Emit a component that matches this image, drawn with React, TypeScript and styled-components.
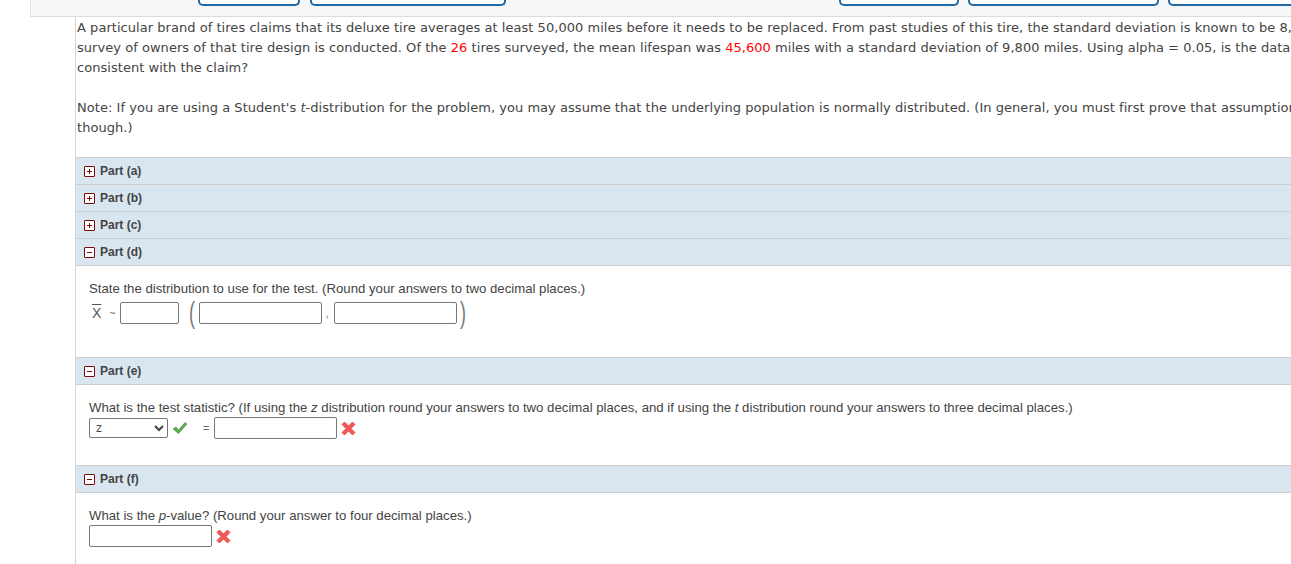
import React from 'react'
import styled, { createGlobalStyle } from 'styled-components'

const GlobalStyle = createGlobalStyle`
  html, body {
    margin: 0;
    padding: 0;
    background: #fff;
    overflow: hidden;
  }
`

const Page = styled.div`
  width: 1291px;
  height: 564px;
  overflow: hidden;
`

const TopBar = styled.div`
  display: flex;
  align-items: flex-start;
  margin-left: 30px;
  width: 1700px;
  height: 16px;
  background: #f7f7f7;
  border-bottom: 1px solid #dcdcdc;
  border-left: 1px solid #e6e6e6;
`

const TabButton = styled.div<{ $w: number; $ml: number }>`
  flex: none;
  width: ${p => p.$w}px;
  height: 4px;
  margin-left: ${p => p.$ml}px;
  border: 2px solid #1f6aa5;
  border-top: none;
  border-radius: 0 0 5px 5px;
  background: #fff;
`

const Main = styled.div`
  margin-left: 75px;
  width: 1700px;
  min-height: 600px;
  border-left: 1px solid #d6d6d6;
`

const Problem = styled.div`
  padding: 1px 0 0 1px;
  font-family: 'DejaVu Sans', Verdana, sans-serif;
  font-size: 13px;
  line-height: 20px;
  letter-spacing: 0.04px;
  color: #444;
  width: 1280px;
  margin-bottom: 19px;
  p {
    margin: 0 0 20px;
  }
  p:last-child {
    margin-bottom: 0;
  }
`

const Red = styled.span`
  color: #f00;
`

const Parts = styled.div`
  border-top: 1px solid #cfcfcf;
`

const PartHeader = styled.div`
  display: flex;
  align-items: center;
  gap: 5px;
  height: 26px;
  padding-left: 8px;
  background: #d9e5ef;
  border-bottom: 1px solid #cfcfcf;
  font-family: 'Liberation Sans', Arial, sans-serif;
  font-weight: bold;
  font-size: 12px;
  color: #444;
`

const ToggleBox = styled.span`
  position: relative;
  width: 9px;
  height: 9px;
  border: 1px solid #7a0a0a;
  border-radius: 1px;
  background: #fff;
  flex: none;
  &::before {
    content: '';
    position: absolute;
    left: 2px;
    top: 4px;
    width: 5px;
    height: 1px;
    background: #7a0a0a;
  }
  &.plus::after {
    content: '';
    position: absolute;
    left: 4px;
    top: 2px;
    width: 1px;
    height: 5px;
    background: #7a0a0a;
  }
`

const PartBody = styled.div<{ $pb: number }>`
  padding: 15px 13px ${p => p.$pb}px;
  border-bottom: 1px solid #cfcfcf;
  background: #fff;
  font-family: 'Liberation Sans', Arial, sans-serif;
  font-size: 13.2px;
  color: #444;
`

const Prompt = styled.div`
  line-height: 15px;
  margin-bottom: 2px;
`

const Row = styled.div<{ $h: number }>`
  display: flex;
  align-items: center;
  height: ${p => p.$h}px;
`

const TextInput = styled.input<{ $w: number }>`
  box-sizing: border-box;
  width: ${p => p.$w}px;
  height: 22px;
  border: 1px solid #767676;
  border-radius: 2px;
  padding: 0 4px;
  margin: 0;
  background: #fff;
  font-family: 'Liberation Sans', Arial, sans-serif;
  font-size: 13px;
`

const XBar = styled.span`
  display: inline-block;
  margin: 0 8px 0 3px;
  font-family: 'Liberation Sans', Arial, sans-serif;
  font-size: 14px;
  color: #555;
  text-decoration: overline;
`

const Small = styled.span<{ $mr: number; $ml?: number }>`
  font-size: 11px;
  color: #666;
  margin-left: ${p => p.$ml ?? 0}px;
  margin-right: ${p => p.$mr}px;
`

const Paren = styled.span<{ $ml: number; $mr: number }>`
  font-family: 'Liberation Sans', Arial, sans-serif;
  font-size: 30px;
  font-weight: 100;
  line-height: 22px;
  color: #777;
  transform: scaleX(0.6);
  margin-left: ${p => p.$ml}px;
  margin-right: ${p => p.$mr}px;
`

const Select = styled.select`
  box-sizing: border-box;
  width: 79px;
  height: 20px;
  border: 1px solid #767676;
  border-radius: 2px;
  background: #fff;
  padding: 0 2px;
  font-family: 'Liberation Sans', Arial, sans-serif;
  font-size: 12px;
  color: #444;
`

const Icon = styled.svg<{ $ml: number }>`
  flex: none;
  margin-left: ${p => p.$ml}px;
`

const Check = () => (
  <Icon $ml={4} width="16" height="14" viewBox="0 0 16 14">
    <path d="M1 8 L4 6 L6.5 9 L13 1.5 L15 3 L6.5 12.5 Z" fill="#5cae4c" stroke="#3d8c32" strokeWidth="0.6" strokeLinejoin="round" />
  </Icon>
)

const Cross = () => (
  <Icon $ml={4} width="15" height="15" viewBox="0 0 15 15">
    <path d="M1 3.5 L3.5 1 L7.5 5 L11.5 1 L14 3.5 L10 7.5 L14 11.5 L11.5 14 L7.5 10 L3.5 14 L1 11.5 L5 7.5 Z" fill="#f25a5a" stroke="#e23d3d" strokeWidth="0.8" strokeLinejoin="round" />
  </Icon>
)

const Header = ({ label, open }: { label: string; open?: boolean }) => (
  <PartHeader>
    <ToggleBox className={open ? '' : 'plus'} />
    {label}
  </PartHeader>
)

export default function App() {
  return (
    <Page>
      <GlobalStyle />
      <TopBar>
        <TabButton $w={98} $ml={167} />
        <TabButton $w={192} $ml={10} />
        <TabButton $w={116} $ml={333} />
        <TabButton $w={187} $ml={9} />
        <TabButton $w={187} $ml={9} />
      </TopBar>
      <Main>
        <Problem>
          <p>
            A particular brand of tires claims that its deluxe tire averages at least 50,000 miles before it needs to be replaced. From past studies of this tire, the standard deviation is known to be 8,000. A survey of owners of that tire design is conducted. Of the <Red>26</Red> tires surveyed, the mean lifespan was <Red>45,600</Red> miles with a standard deviation of 9,800 miles. Using alpha = 0.05, is the data highly consistent with the claim?
          </p>
          <p>
            Note: If you are using a Student's <i>t</i>-distribution for the problem, you may assume that the underlying population is normally distributed. (In general, you must first prove that assumption, though.)
          </p>
        </Problem>
        <Parts>
          <Header label="Part (a)" />
          <Header label="Part (b)" />
          <Header label="Part (c)" />
          <Header label="Part (d)" open />
          <PartBody $pb={29}>
            <Prompt>State the distribution to use for the test. (Round your answers to two decimal places.)</Prompt>
            <Row $h={30}>
              <XBar>X</XBar>
              <Small $mr={4}>~</Small>
              <TextInput $w={59} />
              <Paren $ml={8} $mr={2}>(</Paren>
              <TextInput $w={123} />
              <Small $mr={5} $ml={4}>,</Small>
              <TextInput $w={123} />
              <Paren $ml={1} $mr={0}>)</Paren>
            </Row>
          </PartBody>
          <Header label="Part (e)" open />
          <PartBody $pb={26}>
            <Prompt>
              What is the test statistic? (If using the <i>z</i> distribution round your answers to two decimal places, and if using the <i>t</i> distribution round your answers to three decimal places.)
            </Prompt>
            <Row $h={22}>
              <Select defaultValue="z">
                <option value="z">z</option>
                <option value="t">t</option>
              </Select>
              <Check />
              <Small $mr={5} $ml={15}>=</Small>
              <TextInput $w={123} />
              <Cross />
            </Row>
          </PartBody>
          <Header label="Part (f)" open />
          <PartBody $pb={26}>
            <Prompt>
              What is the <i>p</i>-value? (Round your answer to four decimal places.)
            </Prompt>
            <Row $h={22}>
              <TextInput $w={123} />
              <Cross />
            </Row>
          </PartBody>
        </Parts>
      </Main>
    </Page>
  )
}
